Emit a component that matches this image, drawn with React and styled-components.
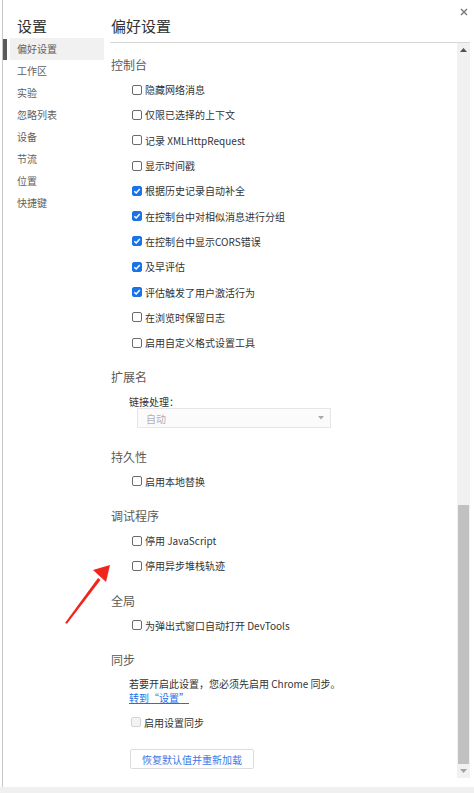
import React from "react";
import styled, { createGlobalStyle } from "styled-components";

const Global = createGlobalStyle`
  html, body { margin: 0; padding: 0; background: #fff; }
  body { font-family: "Noto Sans CJK SC", "Noto Sans", sans-serif; }
  * { box-sizing: border-box; }
`;

const Frame = styled.div`
  position: relative;
  width: 474px;
  height: 793px;
  overflow: hidden;
  display: flex;
  flex-direction: column;
  background: #fff;
  font-family: "Noto Sans CJK SC", "Noto Sans", sans-serif;
`;

const Body = styled.div`
  height: 787px;
  display: flex;
  margin-left: 2px;
  border-left: 1px solid #c8c8c8;
`;

const BottomBand = styled.div`
  height: 6px;
  background: #f0f0f0;
`;

const Sidebar = styled.nav`
  width: 107px;
  display: flex;
  flex-direction: column;
`;

const SideTitle = styled.div`
  padding: 16px 0 0 14px;
  height: 38px;
  font-size: 15px;
  line-height: 20px;
  color: #333;
`;

const SideItem = styled.div`
  display: flex;
  height: 22px;
  align-items: stretch;
`;

const Marker = styled.div`
  width: 4px;
  margin: 1px 0 0;
  background: ${(p) => (p.$active ? "#5b5b5b" : "transparent")};
`;

const SideLabel = styled.div`
  margin-left: 3px;
  width: 94px;
  padding-left: 7px;
  font-size: 10px;
  line-height: 22px;
  color: #5f5f5f;
  background: ${(p) => (p.$active ? "#f1f1f1" : "transparent")};
`;

const Panel = styled.div`
  flex: 1;
  display: flex;
  flex-direction: column;
  padding-right: 4px;
`;

const Header = styled.div`
  height: 43px;
  display: flex;
  justify-content: space-between;
  border-bottom: 1px solid #d6d6d6;
`;

const PageTitle = styled.div`
  padding: 16px 0 0 1px;
  font-size: 15px;
  line-height: 20px;
  color: #333;
`;

const Close = styled.div`
  width: 12px;
  height: 12px;
  margin: 6px 0 0;
  display: flex;
  align-items: center;
  justify-content: center;
`;

const Main = styled.div`
  flex: 1;
  display: flex;
  min-height: 0;
`;

const Scroll = styled.div`
  flex: 1;
  overflow: hidden;
  padding-left: 1px;
`;

const Section = styled.section`
  padding-top: 11px;
  padding-bottom: ${(p) => p.$pb || 0}px;
`;

const SectionTitle = styled.div`
  height: 22px;
  line-height: 22px;
  font-size: 12px;
  color: #5a5a5a;
`;

const Rows = styled.div`
  margin-top: ${(p) => p.$mt || 1}px;
  padding-left: ${(p) => p.$indent || 21}px;
`;

const Row = styled.label`
  height: 25.3px;
  display: flex;
  align-items: center;
  gap: 3px;
  font-size: 10px;
  color: #333;
`;

const Box = styled.span`
  width: 10px;
  height: 10px;
  border-radius: 2px;
  flex: none;
  display: flex;
  align-items: center;
  justify-content: center;
  border: 1px solid ${(p) => (p.$disabled ? "#d4d4d4" : p.$checked ? "#1a73e8" : "#6b6b6b")};
  background: ${(p) => (p.$disabled ? "#f3f3f3" : p.$checked ? "#1a73e8" : "#fff")};
`;

const FieldLabel = styled.div`
  margin: 7px 0 0 18px;
  height: 13px;
  line-height: 13px;
  font-size: 10px;
  color: #333;
`;

const Select = styled.div`
  margin-left: 26px;
  width: 194px;
  height: 20px;
  border: 1px solid #e6e6e6;
  background: #fbfbfb;
  display: flex;
  align-items: center;
  justify-content: space-between;
  padding: 0 6px 0 8px;
  font-size: 10px;
  color: #b0b0b0;
`;

const Note = styled.div`
  margin: 6px 0 0 18px;
  font-size: 10px;
  line-height: 14.5px;
  color: #333;
`;

const Link = styled.a`
  display: block;
  width: max-content;
  color: #1a73e8;
  text-decoration: underline;
`;

const Button = styled.button`
  margin: 14px 0 0 19px;
  height: 20px;
  width: 124px;
  padding: 0;
  border: 1px solid #dadce0;
  border-radius: 2px;
  background: #fff;
  font-family: inherit;
  font-size: 10px;
  color: #3b78e7;
`;

const Track = styled.div`
  width: 13px;
  margin-bottom: 9px;
  background: #f1f1f1;
  display: flex;
  flex-direction: column;
`;

const ArrowCell = styled.div`
  height: ${(p) => p.$h}px;
  display: flex;
  align-items: center;
  justify-content: center;
`;

const TrackGap = styled.div`
  flex: 1;
`;

const Thumb = styled.div`
  height: 259px;
  margin: 0 1px;
  background: #c1c1c1;
`;

const Annotation = styled.svg`
  position: absolute;
  left: 55px;
  top: 555px;
  pointer-events: none;
`;

const Check = () => (
  <svg width="8" height="8" viewBox="0 0 8 8">
    <path d="M1.3 4.2 L3.2 6 L6.8 1.9" fill="none" stroke="#fff" strokeWidth="1.5" />
  </svg>
);

const CheckRow = ({ checked, disabled, children }) => (
  <Row>
    <Box $checked={checked} $disabled={disabled}>{checked && <Check />}</Box>
    <span>{children}</span>
  </Row>
);

const consoleItems = [
  ["隐藏网络消息", false],
  ["仅限已选择的上下文", false],
  ["记录 XMLHttpRequest", false],
  ["显示时间戳", false],
  ["根据历史记录自动补全", true],
  ["在控制台中对相似消息进行分组", true],
  ["在控制台中显示CORS错误", true],
  ["及早评估", true],
  ["评估触发了用户激活行为", true],
  ["在浏览时保留日志", false],
  ["启用自定义格式设置工具", false],
];

const navItems = ["偏好设置", "工作区", "实验", "忽略列表", "设备", "节流", "位置", "快捷键"];

export default function App() {
  return (
    <Frame>
      <Global />
      <Body>
        <Sidebar>
          <SideTitle>设置</SideTitle>
          {navItems.map((n, i) => (
            <SideItem key={n}>
              <Marker $active={i === 0} />
              <SideLabel $active={i === 0}>{n}</SideLabel>
            </SideItem>
          ))}
        </Sidebar>
        <Panel>
          <Header>
            <PageTitle>偏好设置</PageTitle>
            <Close>
              <svg width="8" height="8" viewBox="0 0 8 8">
                <path d="M1 1 L7 7 M7 1 L1 7" stroke="#777" strokeWidth="1.4" />
              </svg>
            </Close>
          </Header>
          <Main>
            <Scroll>
              <Section>
                <SectionTitle>控制台</SectionTitle>
                <Rows>
                  {consoleItems.map(([t, c]) => (
                    <CheckRow key={t} checked={c}>{t}</CheckRow>
                  ))}
                </Rows>
              </Section>
              <Section $pb={6.4}>
                <SectionTitle>扩展名</SectionTitle>
                <FieldLabel>链接处理：</FieldLabel>
                <Select>
                  <span>自动</span>
                  <svg width="6" height="4" viewBox="0 0 6 4">
                    <path d="M0 0 L6 0 L3 3.5 Z" fill="#aaa" />
                  </svg>
                </Select>
              </Section>
              <Section>
                <SectionTitle>持久性</SectionTitle>
                <Rows>
                  <CheckRow>启用本地替换</CheckRow>
                </Rows>
              </Section>
              <Section>
                <SectionTitle>调试程序</SectionTitle>
                <Rows>
                  <CheckRow>停用 JavaScript</CheckRow>
                  <CheckRow>停用异步堆栈轨迹</CheckRow>
                </Rows>
              </Section>
              <Section>
                <SectionTitle>全局</SectionTitle>
                <Rows>
                  <CheckRow>为弹出式窗口自动打开 DevTools</CheckRow>
                </Rows>
              </Section>
              <Section>
                <SectionTitle>同步</SectionTitle>
                <Note>
                  若要开启此设置，您必须先启用 Chrome 同步。
                  <Link>转到“设置”</Link>
                </Note>
                <Rows $mt={4} $indent={20}>
                  <CheckRow disabled>启用设置同步</CheckRow>
                </Rows>
                <Button>恢复默认值并重新加载</Button>
              </Section>
            </Scroll>
            <Track>
              <ArrowCell $h={13}>
                <svg width="7" height="4" viewBox="0 0 7 4">
                  <path d="M0 4 L7 4 L3.5 0 Z" fill="#505050" />
                </svg>
              </ArrowCell>
              <TrackGap />
              <Thumb />
              <ArrowCell $h={14}>
                <svg width="7" height="4" viewBox="0 0 7 4">
                  <path d="M0 0 L7 0 L3.5 4 Z" fill="#a3a3a3" />
                </svg>
              </ArrowCell>
            </Track>
          </Main>
        </Panel>
      </Body>
      <BottomBand />
      <Annotation width="70" height="80" viewBox="0 0 70 80">
        <path d="M10 68 L43 23 L45.5 25 L12 68.8 Z" fill="#f0261c" />
        <path d="M55 10 L38 15 L51 27 Z" fill="#f0261c" />
      </Annotation>
    </Frame>
  );
}
